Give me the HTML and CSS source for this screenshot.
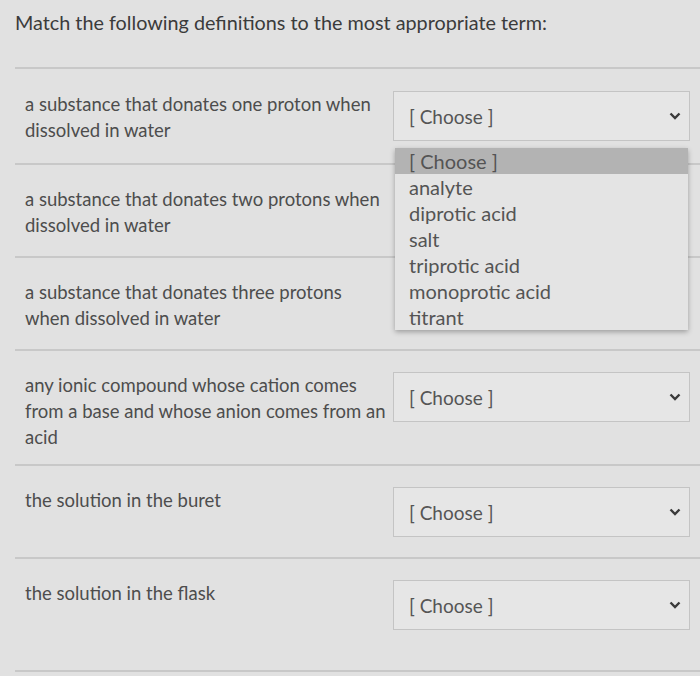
FILE: index.html
```html
<!DOCTYPE html>
<html lang="en">
<head>
<meta charset="utf-8">
<title>Matching question</title>
<link rel="stylesheet" href="styles.css">
</head>
<body>
<div class="page">
  <h1 class="title">Match the following definitions to the most appropriate term:</h1>
  <div class="rows">
    <div class="row first">
      <div class="def">a substance that donates one proton when dissolved in water</div>
      <div class="select-wrap">
        <div class="select"><span>[ Choose ]</span><svg class="chev" viewBox="0 0 12 8" width="12" height="8"><path d="M1.5 1.5 L6 6 L10.5 1.5" fill="none" stroke="#3a3a3a" stroke-width="2.4"/></svg></div>
        <ul class="menu">
          <li class="hl">[ Choose ]</li>
          <li>analyte</li>
          <li>diprotic acid</li>
          <li>salt</li>
          <li>triprotic acid</li>
          <li>monoprotic acid</li>
          <li>titrant</li>
        </ul>
      </div>
    </div>
    <div class="row">
      <div class="def">a substance that donates two protons when dissolved in water</div>
      <div class="select-wrap covered">
        <div class="select"><span>[ Choose ]</span><svg class="chev" viewBox="0 0 12 8" width="12" height="8"><path d="M1.5 1.5 L6 6 L10.5 1.5" fill="none" stroke="#3a3a3a" stroke-width="2.4"/></svg></div>
      </div>
    </div>
    <div class="row">
      <div class="def">a substance that donates three protons when dissolved in water</div>
      <div class="select-wrap covered">
        <div class="select"><span>[ Choose ]</span><svg class="chev" viewBox="0 0 12 8" width="12" height="8"><path d="M1.5 1.5 L6 6 L10.5 1.5" fill="none" stroke="#3a3a3a" stroke-width="2.4"/></svg></div>
      </div>
    </div>
    <div class="row">
      <div class="def">any ionic compound whose cation comes from a base and whose anion comes from an acid</div>
      <div class="select-wrap">
        <div class="select"><span>[ Choose ]</span><svg class="chev" viewBox="0 0 12 8" width="12" height="8"><path d="M1.5 1.5 L6 6 L10.5 1.5" fill="none" stroke="#3a3a3a" stroke-width="2.4"/></svg></div>
      </div>
    </div>
    <div class="row">
      <div class="def">the solution in the buret</div>
      <div class="select-wrap">
        <div class="select"><span>[ Choose ]</span><svg class="chev" viewBox="0 0 12 8" width="12" height="8"><path d="M1.5 1.5 L6 6 L10.5 1.5" fill="none" stroke="#3a3a3a" stroke-width="2.4"/></svg></div>
      </div>
    </div>
    <div class="row last">
      <div class="def">the solution in the flask</div>
      <div class="select-wrap">
        <div class="select"><span>[ Choose ]</span><svg class="chev" viewBox="0 0 12 8" width="12" height="8"><path d="M1.5 1.5 L6 6 L10.5 1.5" fill="none" stroke="#3a3a3a" stroke-width="2.4"/></svg></div>
      </div>
    </div>
  </div>
</div>
</body>
</html>
```
FILE: styles.css
```css
html, body {
  margin: 0;
  padding: 0;
}
body {
  background: #e1e1e1;
  font-family: Lato, "Open Sans", sans-serif;
  color: #4a4a4a;
  width: 700px;
  height: 676px;
  overflow: hidden;
}
.page {
  padding: 9px 0 0 15px;
}
.title {
  margin: 0;
  font-size: 19.8px;
  font-weight: 400;
  color: #3b3b3b;
  line-height: 26px;
  height: 58px;
  border-bottom: 2px solid #c8c8c8;
}
.rows {
  display: flex;
  flex-direction: column;
}
.row {
  display: flex;
  align-items: flex-start;
  padding: 21px 0 14px 10px;
  border-bottom: 2px solid #c8c8c8;
}
.row.first {
  padding-top: 22px;
  padding-bottom: 16px;
}
.row.last {
  padding-bottom: 34px;
}
.def {
  width: 366px;
  font-size: 18.5px;
  line-height: 26px;
  color: #4d4d4d;
  flex: none;
}
.select-wrap {
  position: relative;
  margin-left: 2px;
  margin-bottom: 6px;
  width: 297px;
  flex: none;
}
.select-wrap.covered {
  visibility: hidden;
}
.select {
  height: 50px;
  box-sizing: border-box;
  border: 1px solid #c4c4c4;
  background: #e6e6e6;
  display: flex;
  align-items: center;
  justify-content: space-between;
  padding: 0 8px 0 15px;
  font-size: 19px;
  color: #555;
}
.chev {
  display: block;
}
.menu {
  position: absolute;
  top: 57px;
  left: 2px;
  width: 293px;
  margin: 0;
  padding: 0;
  list-style: none;
  background: #e4e4e4;
  box-shadow: 0 2px 5px rgba(0,0,0,0.3);
  z-index: 2;
}
.menu li {
  height: 26px;
  line-height: 26px;
  padding-left: 14px;
  font-size: 20px;
  color: #545454;
}
.menu li.hl {
  background: #b3b3b3;
}
```
